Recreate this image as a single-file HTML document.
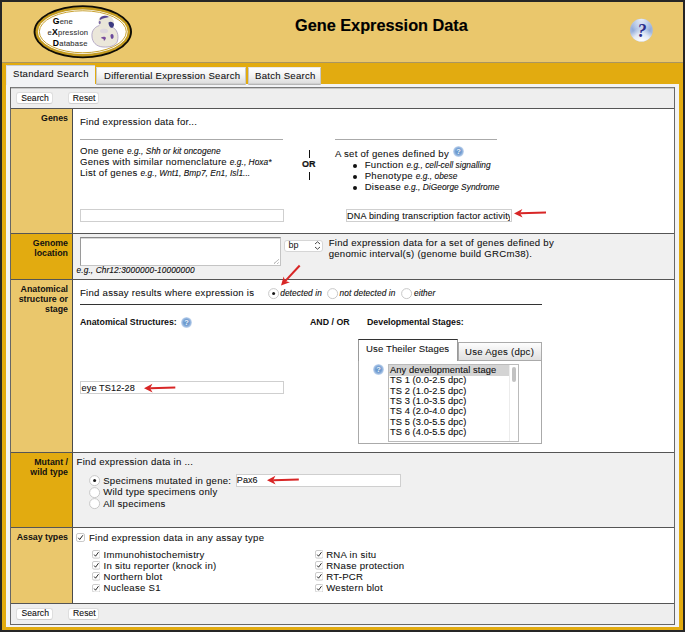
<!DOCTYPE html>
<html><head><meta charset="utf-8">
<style>
*{box-sizing:border-box;margin:0;padding:0}
html,body{width:685px;height:632px;overflow:hidden;background:#262626;font-family:"Liberation Sans",sans-serif;color:#111}
.a{position:absolute}
.t{position:absolute;white-space:nowrap}
#hdr{left:2px;top:2px;width:681px;height:60px;background:#eac76c}
#gold{left:2px;top:62px;width:681px;height:568px;background:#e2ab10}
#tabp{left:5.5px;top:84px;width:673.5px;height:543px;background:#f2f3f5}
.tab{top:66.5px;height:18px;background:linear-gradient(#fefefe,#f4f4f4 40%,#dedede 88%,#a8a8a8);border:1px solid #c8c8c8;border-bottom:none;border-top-color:#e8e8e8}
#tab1{left:5.5px;top:65px;width:89.5px;height:20px;background:#f2f3f5;border-top:1px solid #c9ced8;border-left:1px solid #e4e6ea}
#panel{left:10px;top:86.5px;width:665px;height:538.5px;border:1px solid #666;border-top-color:#7a7a7a;background:#eee;box-shadow:inset 0 1px 0 #c8c8c8}
.btn{height:12px;background:#fff;border:1px solid #dedede;border-bottom-color:#cfcfcf;border-radius:3px}
.row{left:11px;width:663px;border-top:1px solid #555}
.lab{left:11px;width:62px;border-right:1px solid #4a4a4a}
.lg{background:#eac76c}
.dg{background:#e2ab10}
.wh{background:#fff}
.gr{background:#f0f0f0}
.inp{background:#fff;border:1px solid #cfcfcf}
</style></head><body>
<div class="a" id="hdr"></div>
<div class="a" id="gold"></div>
<div class="a" id="tabp"></div>
<div class="a" id="tab1"></div>
<div class="a" style="left:2px;top:62px;width:681px;height:1px;background:#a99561"></div>
<div class="a tab" style="left:96px;width:149.5px"></div>
<div class="a tab" style="left:247.7px;width:73.5px"></div>
<div class="a" id="panel"></div>
<div class="a btn" style="left:15.8px;top:91.5px;width:36.8px"></div>
<div class="a btn" style="left:67.7px;top:91.5px;width:31.3px"></div>
<div class="a row wh" style="top:108px;height:125px"></div>
<div class="a lab lg" style="top:109px;height:124px"></div>
<div class="a row gr" style="top:233px;height:46px"></div>
<div class="a lab dg" style="top:234px;height:45px"></div>
<div class="a row wh" style="top:279px;height:173px"></div>
<div class="a lab lg" style="top:280px;height:172px"></div>
<div class="a row gr" style="top:452px;height:75px"></div>
<div class="a lab dg" style="top:453px;height:74px"></div>
<div class="a row wh" style="top:527px;height:76px"></div>
<div class="a lab lg" style="top:528px;height:75px"></div>
<div class="a row" style="top:603px;height:1px"></div>
<div class="a btn" style="left:16px;top:607.5px;width:36.6px"></div>
<div class="a btn" style="left:68px;top:607.5px;width:31px"></div>
<svg class="a" style="left:0;top:0" width="160" height="64">
<defs><filter id="bl" x="-20%" y="-20%" width="140%" height="140%"><feGaussianBlur stdDeviation="0.45"/></filter>
<radialGradient id="emb" cx="45%" cy="45%" r="60%"><stop offset="0" stop-color="#f4f1e6"/><stop offset="0.7" stop-color="#e6e0d2"/><stop offset="1" stop-color="#b9a9c9"/></radialGradient></defs>
<ellipse cx="82.8" cy="31.75" rx="49.2" ry="26.5" fill="#0e0c06"/>
<ellipse cx="82.8" cy="31.75" rx="47.3" ry="24.7" fill="#c49b20"/>
<ellipse cx="82.8" cy="31.75" rx="44.9" ry="22.3" fill="#fff"/>
<ellipse cx="82.8" cy="31.75" rx="43.5" ry="21" fill="none" stroke="#c9a230" stroke-width="1"/>
<g filter="url(#bl)">
<path d="M92 37 C91 30 96 25.5 102 25 L112 27 C117 29 119 35 117.5 41 C116 46 109 47.5 103 47 C96 46.5 92.5 42 92 37 Z" fill="#ebe7da" stroke="#9d8fb9" stroke-width="0.7"/>
<path d="M98.5 21 C98.5 16 103 15 107 15.5 C111.5 16 114 19 114 23 C114 27 111 30 106 30 C101 30 98.5 26 98.5 21 Z" fill="#e9e5d8"/>
<path d="M99.5 19 C101 15.5 106 15 109 17 C107 17.8 103 18 100 20 Z" fill="#564592"/>
<path d="M108.5 22.5 C110.5 21 113.5 22 114 24.5 C114 27 112.5 28 111 27.8 C109.5 27 108.5 25 108.5 22.5 Z" fill="#3c3a82"/>
<ellipse cx="99.7" cy="22.5" rx="1" ry="1.8" fill="#7b6aa8"/>
<path d="M101 37.5 C103 36.5 105.5 36.5 106 38 C105.5 39.5 104.5 40.5 104 41 L103.5 39 C102.5 38.8 101.5 38.5 101 37.5 Z" fill="#7a4c9c"/>
<path d="M110.5 35 C111.5 33.5 113 34 113.5 35.5 C114 37.5 113 39 111.8 39 C110.8 38 110.3 36.5 110.5 35 Z" fill="#6b4a9c"/>
<ellipse cx="104" cy="31" rx="4" ry="2.2" fill="#d9d0e0" opacity="0.7"/>
</g>
</svg><div class="t" style="left:52.8px;top:17.11px;font-size:7.6px;line-height:9.12px;letter-spacing:0.2px;-webkit-text-stroke:0.1px #333"><b style="font-size:8.6px;color:#000">G</b><span style="color:#333">ene</span></div>
<div class="t" style="left:47.6px;top:27.61px;font-size:7.6px;line-height:9.12px;letter-spacing:0.2px;-webkit-text-stroke:0.1px #333"><span style="color:#333">e</span><b style="font-size:8.6px;color:#000">X</b><span style="color:#333">pression</span></div>
<div class="t" style="left:52.8px;top:38.51px;font-size:7.6px;line-height:9.12px;letter-spacing:0.2px;-webkit-text-stroke:0.1px #333"><b style="font-size:8.6px;color:#000">D</b><span style="color:#333">atabase</span></div>
<svg class="a" style="left:628px;top:17px" width="27" height="27">
<defs><radialGradient id="hh" cx="50%" cy="40%" r="55%"><stop offset="0" stop-color="#b4c7e8"/><stop offset="0.7" stop-color="#93acd9"/><stop offset="1" stop-color="#a9bde3"/></radialGradient>
<radialGradient id="hw" cx="50%" cy="100%" r="60%"><stop offset="0" stop-color="#fff" stop-opacity="1"/><stop offset="0.6" stop-color="#fff" stop-opacity="0.7"/><stop offset="1" stop-color="#fff" stop-opacity="0"/></radialGradient>
<radialGradient id="ht" cx="50%" cy="0%" r="60%"><stop offset="0" stop-color="#eef3fb" stop-opacity="0.9"/><stop offset="1" stop-color="#fff" stop-opacity="0"/></radialGradient></defs>
<circle cx="13.4" cy="13.2" r="11.4" fill="url(#hh)"/>
<circle cx="13.4" cy="13.2" r="11.4" fill="url(#hw)"/>
<circle cx="13.4" cy="13.2" r="11.4" fill="url(#ht)"/>
<text x="14" y="19.6" text-anchor="middle" font-family="Liberation Serif" font-weight="bold" font-style="italic" font-size="18" fill="#2a2d8c">?</text>
</svg><div class="t" style="left:295px;top:15.97px;font-size:16.3px;line-height:19.56px;font-weight:bold;color:#000;-webkit-text-stroke:0.15px #000">Gene Expression Data</div>
<div class="t" style="left:13px;top:67.91px;font-size:9.6px;line-height:11.52px;letter-spacing:0.25px;-webkit-text-stroke:0.07px currentColor">Standard Search</div>
<div class="t" style="left:104px;top:69.91px;font-size:9.6px;line-height:11.52px;letter-spacing:0.25px;-webkit-text-stroke:0.07px currentColor">Differential Expression Search</div>
<div class="t" style="left:255px;top:69.91px;font-size:9.6px;line-height:11.52px;letter-spacing:0.25px;-webkit-text-stroke:0.07px currentColor">Batch Search</div>
<div class="t" style="left:21.2px;top:92.86px;font-size:8.6px;line-height:10.32px;letter-spacing:0.05px;-webkit-text-stroke:0.1px currentColor">Search</div>
<div class="t" style="left:72.8px;top:92.86px;font-size:8.6px;line-height:10.32px;letter-spacing:0.05px;-webkit-text-stroke:0.1px currentColor">Reset</div>
<div class="t" style="left:21.5px;top:608.16px;font-size:8.6px;line-height:10.32px;letter-spacing:0.05px;-webkit-text-stroke:0.1px currentColor">Search</div>
<div class="t" style="left:73.1px;top:608.16px;font-size:8.6px;line-height:10.32px;letter-spacing:0.05px;-webkit-text-stroke:0.1px currentColor">Reset</div>
<div class="t" style="right:617px;top:112.67px;font-size:8.8px;line-height:10.56px;font-weight:bold;text-align:right">Genes</div>
<div class="t" style="right:617px;top:237.67px;font-size:8.8px;line-height:10.56px;font-weight:bold;text-align:right">Genome</div>
<div class="t" style="right:617px;top:247.67px;font-size:8.8px;line-height:10.56px;font-weight:bold;text-align:right">location</div>
<div class="t" style="right:617px;top:284.07px;font-size:8.8px;line-height:10.56px;font-weight:bold;text-align:right">Anatomical</div>
<div class="t" style="right:617px;top:294.17px;font-size:8.8px;line-height:10.56px;font-weight:bold;text-align:right">structure or</div>
<div class="t" style="right:617px;top:304.37px;font-size:8.8px;line-height:10.56px;font-weight:bold;text-align:right">stage</div>
<div class="t" style="right:617px;top:456.67px;font-size:8.8px;line-height:10.56px;font-weight:bold;text-align:right">Mutant /</div>
<div class="t" style="right:617px;top:466.87px;font-size:8.8px;line-height:10.56px;font-weight:bold;text-align:right">wild type</div>
<div class="t" style="right:617px;top:532.07px;font-size:8.8px;line-height:10.56px;font-weight:bold;text-align:right">Assay types</div>
<div class="t" style="left:80px;top:116.31px;font-size:9.6px;line-height:11.52px;letter-spacing:0.25px;-webkit-text-stroke:0.07px currentColor">Find expression data for...</div>
<div class="a" style="left:80px;top:139px;width:203px;height:1px;background:#aaa"></div>
<div class="a" style="left:335px;top:139px;width:162px;height:1px;background:#aaa"></div>
<div class="t" style="left:80px;top:145.21px;font-size:9.6px;line-height:11.52px;letter-spacing:0.25px;-webkit-text-stroke:0.07px currentColor">One gene <i style="font-size:8.4px;letter-spacing:0.02px;-webkit-text-stroke:0.1px currentColor">e.g., Shh or kit oncogene</i></div>
<div class="t" style="left:80px;top:156.01px;font-size:9.6px;line-height:11.52px;letter-spacing:0.25px;-webkit-text-stroke:0.07px currentColor">Genes with similar nomenclature <i style="font-size:8.4px;letter-spacing:0.02px;-webkit-text-stroke:0.1px currentColor">e.g., Hoxa*</i></div>
<div class="t" style="left:80px;top:167.11px;font-size:9.6px;line-height:11.52px;letter-spacing:0.25px;-webkit-text-stroke:0.07px currentColor">List of genes <i style="font-size:8.4px;letter-spacing:0.02px;-webkit-text-stroke:0.1px currentColor">e.g., Wnt1, Bmp7, En1, Isl1...</i></div>
<div class="a" style="left:308.5px;top:149.5px;width:1.5px;height:8.2px;background:#111"></div>
<div class="t" style="left:302px;top:159.18px;font-size:9px;line-height:10.8px;font-weight:bold;-webkit-text-stroke:0.2px currentColor">OR</div>
<div class="a" style="left:308.5px;top:172px;width:1.5px;height:8.2px;background:#111"></div>
<div class="t" style="left:335px;top:148.31px;font-size:9.6px;line-height:11.52px;letter-spacing:0.25px;-webkit-text-stroke:0.07px currentColor">A set of genes defined by</div>
<svg class="a" style="left:451.8px;top:144.7px" width="13.0" height="13.0"><defs><radialGradient id="hg458151" cx="50%" cy="50%" r="50%"><stop offset="0" stop-color="#5d8fc7"/><stop offset="0.55" stop-color="#76a0d2"/><stop offset="0.85" stop-color="#a9c4e6"/><stop offset="1" stop-color="#d6e3f3"/></radialGradient></defs><circle cx="6.5" cy="6.5" r="5.5" fill="url(#hg458151)"/><text x="6.5" y="9.14" text-anchor="middle" font-family="Liberation Sans" font-weight="bold" font-size="7.425000000000001" fill="#eef3fa">?</text></svg>
<div class="a" style="left:352.8px;top:163.60000000000002px;width:4px;height:4px;border-radius:50%;background:#111"></div>
<div class="t" style="left:364.7px;top:158.71px;font-size:9.6px;line-height:11.52px;letter-spacing:0.25px;-webkit-text-stroke:0.07px currentColor">Function <i style="font-size:8.4px;letter-spacing:0.02px;-webkit-text-stroke:0.1px currentColor">e.g., cell-cell signalling</i></div>
<div class="a" style="left:352.8px;top:175.0px;width:4px;height:4px;border-radius:50%;background:#111"></div>
<div class="t" style="left:364.7px;top:170.11px;font-size:9.6px;line-height:11.52px;letter-spacing:0.25px;-webkit-text-stroke:0.07px currentColor">Phenotype <i style="font-size:8.4px;letter-spacing:0.02px;-webkit-text-stroke:0.1px currentColor">e.g., obese</i></div>
<div class="a" style="left:352.8px;top:186.20000000000002px;width:4px;height:4px;border-radius:50%;background:#111"></div>
<div class="t" style="left:364.7px;top:181.31px;font-size:9.6px;line-height:11.52px;letter-spacing:0.25px;-webkit-text-stroke:0.07px currentColor">Disease <i style="font-size:8.4px;letter-spacing:0.02px;-webkit-text-stroke:0.1px currentColor">e.g., DiGeorge Syndrome</i></div>
<div class="a inp" style="left:80px;top:209px;width:204px;height:13px"></div>
<div class="a inp" style="left:346px;top:209px;width:166px;height:13px;overflow:hidden"></div>
<div class="a" style="left:347px;top:209px;width:163px;height:13px;overflow:hidden"><div class="t" style="left:0px;top:1.58px;font-size:9px;line-height:10.8px;letter-spacing:0.22px;-webkit-text-stroke:0.1px currentColor">DNA binding transcription factor activity</div>
</div>
<svg class="a" style="left:0;top:0" width="685" height="632" overflow="visible"><line x1="546" y1="212.6" x2="520.1180883960177" y2="213.24704779009957" stroke="#d82626" stroke-width="2.0"/><polygon points="514,213.4 522.3898785724801,208.88890949558336 520.1180883960177,213.24704779009957 522.6048114164579,217.48622325469321" fill="#d82626"/></svg>
<div class="a" style="left:80px;top:237px;width:201px;height:28.8px;background:#fff;border:1px solid #8a8a8a;border-color:#888 #c4c4c4 #c4c4c4 #9a9a9a;box-shadow:inset 0 1px 0 #d8d8d8"></div>
<svg class="a" style="left:272px;top:257px" width="9" height="9"><path d="M2.2 6.4 L6.8 2.4 M5.5 6.5 L6.9 5.3" stroke="#6a6a6a" stroke-width="0.9" stroke-dasharray="1 0.6"/></svg>
<div class="a" style="left:284px;top:239.5px;width:39px;height:12px;background:#fff;border:1px solid #d6d6d6;border-radius:3px"></div>
<div class="t" style="left:288.5px;top:240.48px;font-size:9px;line-height:10.8px">bp</div>
<svg class="a" style="left:313px;top:240px" width="9" height="11"><path d="M2 4 L4.5 1.8 L7 4 M2 7 L4.5 9.2 L7 7" fill="none" stroke="#333" stroke-width="0.9"/></svg>
<div class="t" style="left:328.7px;top:236.91px;font-size:9.6px;line-height:11.52px;letter-spacing:0.25px;-webkit-text-stroke:0.07px currentColor">Find expression data for a set of genes defined by</div>
<div class="t" style="left:328.7px;top:248.11px;font-size:9.6px;line-height:11.52px;letter-spacing:0.25px;-webkit-text-stroke:0.07px currentColor">genomic interval(s) (genome build GRCm38).</div>
<div class="t" style="left:76.6px;top:266.24px;font-size:8.3px;line-height:9.96px;font-style:italic;letter-spacing:0.1px;-webkit-text-stroke:0.12px currentColor">e.g., Chr12:3000000-10000000</div>
<div class="t" style="left:80px;top:287.31px;font-size:9.6px;line-height:11.52px;letter-spacing:0.25px;-webkit-text-stroke:0.07px currentColor">Find assay results where expression is</div>
<svg class="a" style="left:266.79999999999995px;top:286.9px" width="13.2" height="13.2"><circle cx="6.6" cy="6.6" r="5.0" fill="#fff" stroke="#c2c2c2" stroke-width="0.9"/><circle cx="6.6" cy="6.6" r="1.5" fill="#1a1a1a"/></svg>
<div class="t" style="left:280.2px;top:288.94px;font-size:8.3px;line-height:9.96px;font-style:italic;letter-spacing:0.1px;-webkit-text-stroke:0.12px currentColor">detected in</div>
<svg class="a" style="left:325.9px;top:286.9px" width="13.2" height="13.2"><circle cx="6.6" cy="6.6" r="5.0" fill="#fff" stroke="#c2c2c2" stroke-width="0.9"/></svg>
<div class="t" style="left:339.5px;top:288.94px;font-size:8.3px;line-height:9.96px;font-style:italic;letter-spacing:0.1px;-webkit-text-stroke:0.12px currentColor">not detected in</div>
<svg class="a" style="left:400.4px;top:286.9px" width="13.2" height="13.2"><circle cx="6.6" cy="6.6" r="5.0" fill="#fff" stroke="#c2c2c2" stroke-width="0.9"/></svg>
<div class="t" style="left:414px;top:288.94px;font-size:8.3px;line-height:9.96px;font-style:italic;letter-spacing:0.1px;-webkit-text-stroke:0.12px currentColor">either</div>
<div class="a" style="left:80px;top:303.5px;width:462px;height:1px;background:#333"></div>
<div class="t" style="left:80px;top:316.67px;font-size:8.8px;line-height:10.56px;font-weight:bold">Anatomical Structures:</div>
<svg class="a" style="left:179.8px;top:316.2px" width="13.0" height="13.0"><defs><radialGradient id="hg186322" cx="50%" cy="50%" r="50%"><stop offset="0" stop-color="#5d8fc7"/><stop offset="0.55" stop-color="#76a0d2"/><stop offset="0.85" stop-color="#a9c4e6"/><stop offset="1" stop-color="#d6e3f3"/></radialGradient></defs><circle cx="6.5" cy="6.5" r="5.5" fill="url(#hg186322)"/><text x="6.5" y="9.14" text-anchor="middle" font-family="Liberation Sans" font-weight="bold" font-size="7.425000000000001" fill="#eef3fa">?</text></svg>
<div class="t" style="left:310px;top:316.67px;font-size:8.8px;line-height:10.56px;font-weight:bold">AND / OR</div>
<div class="t" style="left:367px;top:316.67px;font-size:8.8px;line-height:10.56px;font-weight:bold">Developmental Stages:</div>
<div class="a inp" style="left:80px;top:381px;width:204px;height:13px"></div>
<div class="t" style="left:81.6px;top:382.79px;font-size:9.1px;line-height:10.92px;letter-spacing:0.12px;-webkit-text-stroke:0.1px currentColor">eye TS12-28</div>
<div class="a" style="left:358px;top:360px;width:184px;height:84px;border:1px solid #aaa;background:#fff"></div>
<div class="a" style="left:358px;top:338.5px;width:100px;height:22px;border:1px solid #999;border-top-color:#333;border-bottom:none;background:#fff"></div>
<div class="a" style="left:458px;top:342px;width:84px;height:19px;border:1px solid #aaa;background:linear-gradient(#fdfdfd,#e0e0e0)"></div>
<div class="t" style="left:366px;top:342.51px;font-size:9.6px;line-height:11.52px;letter-spacing:0.25px;-webkit-text-stroke:0.07px currentColor;letter-spacing:0.1px">Use Theiler Stages</div>
<div class="t" style="left:465px;top:346.41px;font-size:9.6px;line-height:11.52px;letter-spacing:0.25px;-webkit-text-stroke:0.07px currentColor">Use Ages (dpc)</div>
<svg class="a" style="left:372.0px;top:362.6px" width="13.0" height="13.0"><defs><radialGradient id="hg378369" cx="50%" cy="50%" r="50%"><stop offset="0" stop-color="#5d8fc7"/><stop offset="0.55" stop-color="#76a0d2"/><stop offset="0.85" stop-color="#a9c4e6"/><stop offset="1" stop-color="#d6e3f3"/></radialGradient></defs><circle cx="6.5" cy="6.5" r="5.5" fill="url(#hg378369)"/><text x="6.5" y="9.14" text-anchor="middle" font-family="Liberation Sans" font-weight="bold" font-size="7.425000000000001" fill="#eef3fa">?</text></svg>
<div class="a" style="left:387.5px;top:364px;width:131px;height:77.5px;border:1px solid #bbb;background:#fff;overflow:hidden"></div>
<div class="a" style="left:388.5px;top:365px;width:121px;height:10.5px;background:#d4d4d4"></div>
<div class="a" style="left:509px;top:365px;width:1px;height:76px;background:#ececec"></div>
<div class="a" style="left:511.5px;top:367px;width:4.5px;height:15px;border-radius:2.2px;background:#c2c2c2"></div>
<div class="t" style="left:390px;top:364.70px;font-size:9.3px;line-height:11.16px;letter-spacing:0.08px;-webkit-text-stroke:0.12px currentColor">Any developmental stage</div>
<div class="t" style="left:390px;top:375.10px;font-size:9.3px;line-height:11.16px;letter-spacing:0.08px;-webkit-text-stroke:0.12px currentColor">TS 1 (0.0-2.5 dpc)</div>
<div class="t" style="left:390px;top:385.50px;font-size:9.3px;line-height:11.16px;letter-spacing:0.08px;-webkit-text-stroke:0.12px currentColor">TS 2 (1.0-2.5 dpc)</div>
<div class="t" style="left:390px;top:395.90px;font-size:9.3px;line-height:11.16px;letter-spacing:0.08px;-webkit-text-stroke:0.12px currentColor">TS 3 (1.0-3.5 dpc)</div>
<div class="t" style="left:390px;top:406.30px;font-size:9.3px;line-height:11.16px;letter-spacing:0.08px;-webkit-text-stroke:0.12px currentColor">TS 4 (2.0-4.0 dpc)</div>
<div class="t" style="left:390px;top:416.70px;font-size:9.3px;line-height:11.16px;letter-spacing:0.08px;-webkit-text-stroke:0.12px currentColor">TS 5 (3.0-5.5 dpc)</div>
<div class="t" style="left:390px;top:427.10px;font-size:9.3px;line-height:11.16px;letter-spacing:0.08px;-webkit-text-stroke:0.12px currentColor">TS 6 (4.0-5.5 dpc)</div>
<div class="t" style="left:76.6px;top:456.41px;font-size:9.6px;line-height:11.52px;letter-spacing:0.25px;-webkit-text-stroke:0.07px currentColor">Find expression data in ...</div>
<svg class="a" style="left:88.4px;top:473.9px" width="13.2" height="13.2"><circle cx="6.6" cy="6.6" r="5.0" fill="#fff" stroke="#c2c2c2" stroke-width="0.9"/><circle cx="6.6" cy="6.6" r="1.5" fill="#1a1a1a"/></svg>
<svg class="a" style="left:88.4px;top:485.5px" width="13.2" height="13.2"><circle cx="6.6" cy="6.6" r="5.0" fill="#fff" stroke="#c2c2c2" stroke-width="0.9"/></svg>
<svg class="a" style="left:88.4px;top:496.79999999999995px" width="13.2" height="13.2"><circle cx="6.6" cy="6.6" r="5.0" fill="#fff" stroke="#c2c2c2" stroke-width="0.9"/></svg>
<div class="t" style="left:103.2px;top:474.91px;font-size:9.6px;line-height:11.52px;letter-spacing:0.25px;-webkit-text-stroke:0.07px currentColor">Specimens mutated in gene:</div>
<div class="t" style="left:103.2px;top:486.41px;font-size:9.6px;line-height:11.52px;letter-spacing:0.25px;-webkit-text-stroke:0.07px currentColor">Wild type specimens only</div>
<div class="t" style="left:103.2px;top:497.91px;font-size:9.6px;line-height:11.52px;letter-spacing:0.25px;-webkit-text-stroke:0.07px currentColor">All specimens</div>
<div class="a inp" style="left:235.5px;top:474px;width:165.5px;height:12.5px"></div>
<div class="t" style="left:236.8px;top:474.88px;font-size:9px;line-height:10.8px;letter-spacing:0.1px;-webkit-text-stroke:0.1px currentColor">Pax6</div>
<svg class="a" style="left:76.4px;top:533.2px" width="9" height="9" viewBox="0 0 9 9"><rect x="0.5" y="0.5" width="8" height="8" rx="1.6" fill="#fff" stroke="#c8c8c8"/><path d="M2.3 4.8 L3.7 6.5 L6.8 2.3" fill="none" stroke="#222" stroke-width="1"/></svg>
<div class="t" style="left:88.9px;top:531.71px;font-size:9.6px;line-height:11.52px;letter-spacing:0.25px;-webkit-text-stroke:0.07px currentColor">Find expression data in any assay type</div>
<svg class="a" style="left:91.5px;top:550.2px" width="8.6" height="8.6" viewBox="0 0 9 9"><rect x="0.5" y="0.5" width="8" height="8" rx="1.6" fill="#fff" stroke="#c8c8c8"/><path d="M2.3 4.8 L3.7 6.5 L6.8 2.3" fill="none" stroke="#222" stroke-width="1"/></svg>
<div class="t" style="left:103.6px;top:548.61px;font-size:9.6px;line-height:11.52px;letter-spacing:0.25px;-webkit-text-stroke:0.07px currentColor">Immunohistochemistry</div>
<svg class="a" style="left:314.8px;top:550.2px" width="8.6" height="8.6" viewBox="0 0 9 9"><rect x="0.5" y="0.5" width="8" height="8" rx="1.6" fill="#fff" stroke="#c8c8c8"/><path d="M2.3 4.8 L3.7 6.5 L6.8 2.3" fill="none" stroke="#222" stroke-width="1"/></svg>
<div class="t" style="left:326.2px;top:548.61px;font-size:9.6px;line-height:11.52px;letter-spacing:0.25px;-webkit-text-stroke:0.07px currentColor">RNA in situ</div>
<svg class="a" style="left:91.5px;top:561.3000000000001px" width="8.6" height="8.6" viewBox="0 0 9 9"><rect x="0.5" y="0.5" width="8" height="8" rx="1.6" fill="#fff" stroke="#c8c8c8"/><path d="M2.3 4.8 L3.7 6.5 L6.8 2.3" fill="none" stroke="#222" stroke-width="1"/></svg>
<div class="t" style="left:103.6px;top:559.71px;font-size:9.6px;line-height:11.52px;letter-spacing:0.25px;-webkit-text-stroke:0.07px currentColor">In situ reporter (knock in)</div>
<svg class="a" style="left:314.8px;top:561.3000000000001px" width="8.6" height="8.6" viewBox="0 0 9 9"><rect x="0.5" y="0.5" width="8" height="8" rx="1.6" fill="#fff" stroke="#c8c8c8"/><path d="M2.3 4.8 L3.7 6.5 L6.8 2.3" fill="none" stroke="#222" stroke-width="1"/></svg>
<div class="t" style="left:326.2px;top:559.71px;font-size:9.6px;line-height:11.52px;letter-spacing:0.25px;-webkit-text-stroke:0.07px currentColor">RNase protection</div>
<svg class="a" style="left:91.5px;top:572.4000000000001px" width="8.6" height="8.6" viewBox="0 0 9 9"><rect x="0.5" y="0.5" width="8" height="8" rx="1.6" fill="#fff" stroke="#c8c8c8"/><path d="M2.3 4.8 L3.7 6.5 L6.8 2.3" fill="none" stroke="#222" stroke-width="1"/></svg>
<div class="t" style="left:103.6px;top:570.81px;font-size:9.6px;line-height:11.52px;letter-spacing:0.25px;-webkit-text-stroke:0.07px currentColor">Northern blot</div>
<svg class="a" style="left:314.8px;top:572.4000000000001px" width="8.6" height="8.6" viewBox="0 0 9 9"><rect x="0.5" y="0.5" width="8" height="8" rx="1.6" fill="#fff" stroke="#c8c8c8"/><path d="M2.3 4.8 L3.7 6.5 L6.8 2.3" fill="none" stroke="#222" stroke-width="1"/></svg>
<div class="t" style="left:326.2px;top:570.81px;font-size:9.6px;line-height:11.52px;letter-spacing:0.25px;-webkit-text-stroke:0.07px currentColor">RT-PCR</div>
<svg class="a" style="left:91.5px;top:583.5px" width="8.6" height="8.6" viewBox="0 0 9 9"><rect x="0.5" y="0.5" width="8" height="8" rx="1.6" fill="#fff" stroke="#c8c8c8"/><path d="M2.3 4.8 L3.7 6.5 L6.8 2.3" fill="none" stroke="#222" stroke-width="1"/></svg>
<div class="t" style="left:103.6px;top:581.91px;font-size:9.6px;line-height:11.52px;letter-spacing:0.25px;-webkit-text-stroke:0.07px currentColor">Nuclease S1</div>
<svg class="a" style="left:314.8px;top:583.5px" width="8.6" height="8.6" viewBox="0 0 9 9"><rect x="0.5" y="0.5" width="8" height="8" rx="1.6" fill="#fff" stroke="#c8c8c8"/><path d="M2.3 4.8 L3.7 6.5 L6.8 2.3" fill="none" stroke="#222" stroke-width="1"/></svg>
<div class="t" style="left:326.2px;top:581.91px;font-size:9.6px;line-height:11.52px;letter-spacing:0.25px;-webkit-text-stroke:0.07px currentColor">Western blot</div>
<svg class="a" style="left:0;top:0" width="685" height="632"><line x1="299.7" y1="265.5" x2="285.16863404482274" y2="281.1192757058323" stroke="#d82626" stroke-width="2.0"/><polygon points="281,285.6 283.64154818890063,276.44782959262034 285.16863404482274,281.1192757058323 289.93799082449584,282.3057140346915" fill="#d82626"/><line x1="175.3" y1="387.6" x2="150.11847008974124" y2="388.16316520566073" stroke="#d82626" stroke-width="2.0"/><polygon points="144,388.3 152.40173303057873,383.8110266114753 150.11847008974124,388.16316520566073 152.5940172187025,392.4088767375823" fill="#d82626"/><line x1="298.8" y1="479.6" x2="273.1185178045616" y2="480.1653156458116" stroke="#d82626" stroke-width="2.0"/><polygon points="267,480.3 275.4033102313338,475.81397980878813 273.1185178045616,480.1653156458116 275.592572559115,484.41189698513284" fill="#d82626"/></svg>
</body></html>
